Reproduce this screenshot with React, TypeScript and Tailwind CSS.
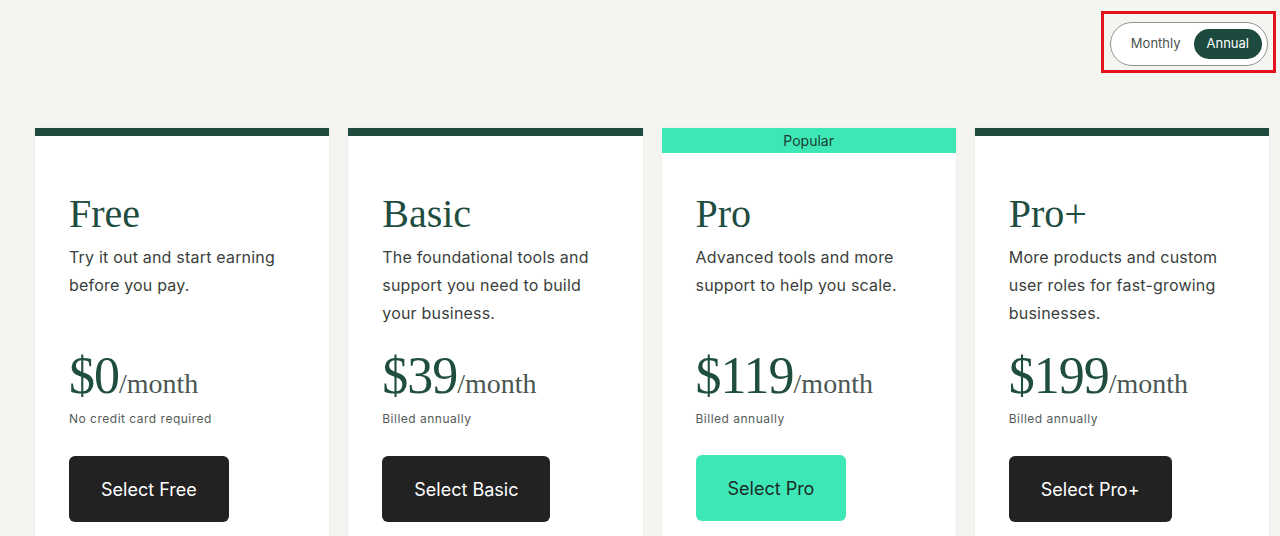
import React from 'react';

type Plan = {
  name: string;
  blurb: string;
  price: string;
  note: string;
  popular?: boolean;
};

const plans: Plan[] = [
  { name: 'Free', blurb: 'Try it out and start earning before you pay.', price: '$0', note: 'No credit card required' },
  { name: 'Basic', blurb: 'The foundational tools and support you need to build your business.', price: '$39', note: 'Billed annually' },
  { name: 'Pro', blurb: 'Advanced tools and more support to help you scale.', price: '$119', note: 'Billed annually', popular: true },
  { name: 'Pro+', blurb: 'More products and custom user roles for fast-growing businesses.', price: '$199', note: 'Billed annually' },
];

const serif = { fontFamily: '"Liberation Serif", "Times New Roman", serif' };

function PlanCard({ plan }: { plan: Plan }) {
  return (
    <div className="flex flex-col bg-white shadow-[0_0_2px_rgba(0,0,0,0.06)] min-h-[420px]">
      {plan.popular ? (
        <div className="h-[25px] bg-[#3de8b6] flex items-center justify-center text-[14px] text-[#1d3c34]">
          Popular
        </div>
      ) : (
        <div className="h-2 bg-[#1f4a3e]" />
      )}
      <div className={plan.popular ? 'px-[34px] pt-[37px]' : 'px-[34px] pt-[54px]'}>
        <h2 style={serif} className="text-[40px] leading-[48px] text-[#1f4d3f]">
          {plan.name}
        </h2>
        <p className="mt-[5px] min-h-[84px] text-[16px] leading-[28px] tracking-[0.2px] text-[#3a3f3d]">
          {plan.blurb}
        </p>
        <div style={serif} className="mt-[23px] flex items-baseline leading-[52px]">
          <span className="text-[52px] tracking-[-1px] text-[#1f4d3f]">{plan.price}</span>
          <span className="text-[28px] text-[#4b5753]">/month</span>
        </div>
        <p className="mt-[1px] text-[12px] leading-4 tracking-[0.5px] text-[#555b59]">{plan.note}</p>
        <button
          className={
            plan.popular
              ? 'mt-[28px] inline-flex h-[66px] items-center rounded-[6px] bg-[#3de8b6] px-[32px] text-[18px] text-[#1d2b27]'
              : 'mt-[29px] inline-flex h-[66px] items-center rounded-[6px] bg-[#222222] px-[32px] text-[18px] text-white'
          }
        >
          Select {plan.name}
        </button>
      </div>
    </div>
  );
}

export default function App() {
  return (
    <div
      className="min-h-screen bg-[#f4f4f0] overflow-hidden"
      style={{ fontFamily: 'Inter, "Liberation Sans", Arial, sans-serif' }}
    >
      <div className="flex justify-end pt-[11px] pr-[4px]">
        <div className="border-[3px] border-[#e3121b] pt-[8px] pb-[4px] pl-[6px] pr-[5px]">
          <div className="flex items-center gap-[13px] rounded-full border border-[#8f9592] bg-white py-[6px] pl-[20px] pr-[5px]">
            <span className="text-[13px] text-[#4d5250]">Monthly</span>
            <span className="flex h-[30px] items-center rounded-full bg-[#1d4a3e] px-[13px] text-[13px] text-white">
              Annual
            </span>
          </div>
        </div>
      </div>
      <div className="mt-[55px] grid grid-cols-4 gap-[19px] pl-[35px] pr-[11px]">
        {plans.map((p) => (
          <PlanCard key={p.name} plan={p} />
        ))}
      </div>
    </div>
  );
}
